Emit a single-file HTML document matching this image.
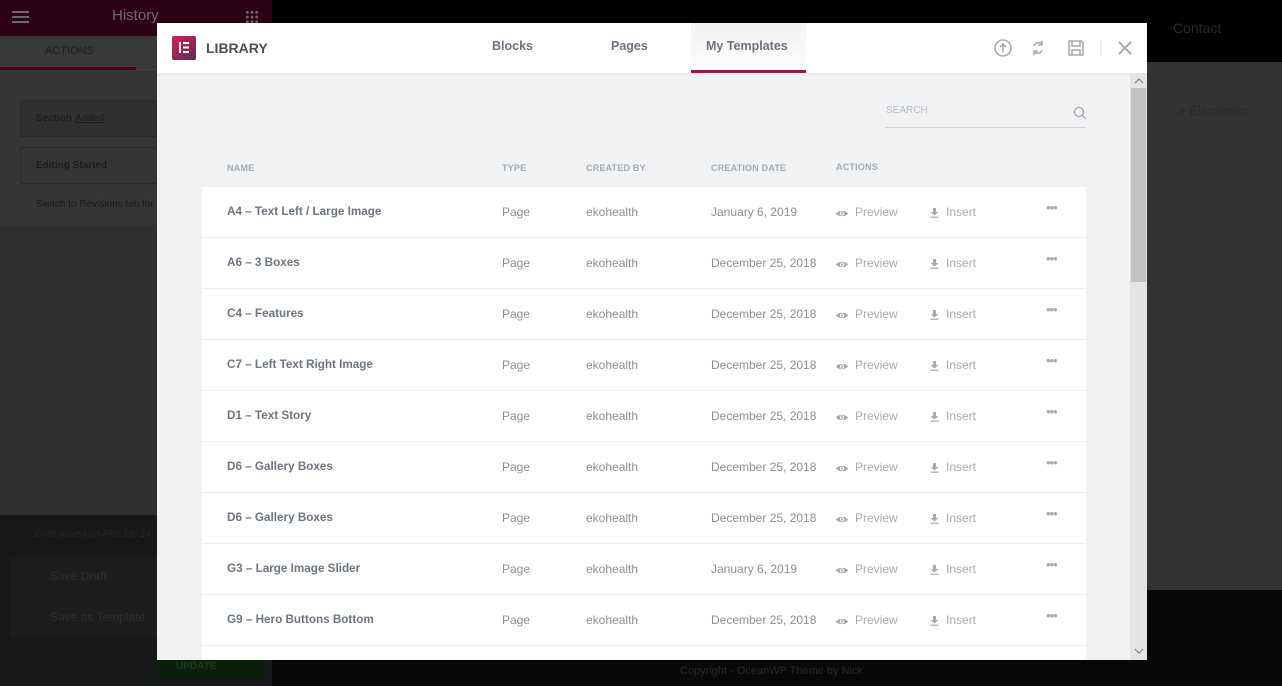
<!DOCTYPE html>
<html><head><meta charset="utf-8"><style>
*{box-sizing:border-box;margin:0;padding:0}
body{width:1282px;height:686px;overflow:hidden;position:relative;font-family:"Liberation Sans",Arial,sans-serif;background:#000}
.abs{position:absolute}
.row{position:absolute;left:0;width:884px;height:51px;background:#fff;border-bottom:1px solid #eef0f2;font-size:12px;color:#8a9099}
.row span{position:absolute;top:18px;white-space:nowrap}
.nm{left:25px;color:#6d7580;font-weight:bold;font-size:11.7px}
.pv{left:634px;color:#a4abb3}
.in{left:728px;color:#a4abb3}
.dt{left:844px;top:13px!important;color:#a4abb3;font-size:13px;letter-spacing:-1px}
.hd{position:absolute;font-size:9px;color:#a4abb3;font-weight:bold;letter-spacing:.2px}
svg.ic{vertical-align:-2px;margin-right:7px}
</style></head><body>
<div class="abs" style="left:0;top:0;width:272px;height:36px;background:#2d0214"></div>
<div class="abs" style="left:12px;top:11px;width:17px;height:2px;background:#6a6a6a;box-shadow:0 5px 0 #6a6a6a,0 10px 0 #6a6a6a"></div>
<div class="abs" style="left:112px;top:7px;font-size:15px;color:#6b6b6b">History</div>
<div class="abs" style="left:245px;top:10px;width:14px;height:14px;background:radial-gradient(circle,#666 1.4px,transparent 1.6px) 0 0/4.7px 4.7px"></div>
<div class="abs" style="left:0;top:36px;width:272px;height:34px;background:#383838"></div>
<div class="abs" style="left:45px;top:45px;font-size:11px;color:#1e1e1e">ACTIONS</div>
<div class="abs" style="left:0;top:67px;width:136px;height:3px;background:#4a0019"></div>
<div class="abs" style="left:136px;top:69px;width:136px;height:1px;background:#444"></div>
<div class="abs" style="left:0;top:70px;width:272px;height:155px;background:#353535"></div>
<div class="abs" style="left:0;top:225px;width:272px;height:290px;background:#2f3030"></div>
<div class="abs" style="left:20px;top:100px;width:140px;height:37px;border:1px solid #2a2a2a;background:#303030"></div>
<div class="abs" style="left:36px;top:113px;font-size:10px;color:#1c1c1c;font-weight:bold">Section <i style="font-weight:normal;text-decoration:underline">Added</i></div>
<div class="abs" style="left:20px;top:147px;width:140px;height:37px;border:1px solid #2a2a2a"></div>
<div class="abs" style="left:36px;top:160px;font-size:10px;color:#1c1c1c;font-weight:bold">Editing Started</div>
<div class="abs" style="left:36px;top:199px;font-size:10px;color:#1c1c1c">Switch to Revisions tab for</div>
<div class="abs" style="left:0;top:515px;width:272px;height:171px;background:#17181a"></div>
<div class="abs" style="left:35px;top:529px;font-size:10px;color:#262626;font-style:italic">Draft saved on Feb 19, 14</div>
<div class="abs" style="left:10px;top:557px;width:160px;height:80px;background:#1b1c1e"></div>
<div class="abs" style="left:50px;top:569px;font-size:12px;color:#2e2e2e">Save Draft</div>
<div class="abs" style="left:50px;top:610px;font-size:12px;color:#2e2e2e">Save as Template</div>
<div class="abs" style="left:157px;top:660px;width:106px;height:20px;background:#0b200b"></div>
<div class="abs" style="left:176px;top:661px;font-size:10px;color:#1e3a1e;font-weight:bold">UPDATE</div>
<div class="abs" style="left:272px;top:0;width:1010px;height:62px;background:#000"></div>
<div class="abs" style="left:1173px;top:20px;font-size:14px;color:#2a2a2a">Contact</div>
<div class="abs" style="left:1147px;top:62px;width:135px;height:528px;background:#333"></div>
<div class="abs" style="left:1178px;top:103px;font-size:13px;color:#2a2a2a">&gt; Elementor</div>
<div class="abs" style="left:272px;top:590px;width:1010px;height:96px;background:#080808"></div>
<div class="abs" style="left:680px;top:665px;font-size:11px;color:#2a2a2a">Copyright - OceanWP Theme by Nick</div>
<div class="abs" style="left:157px;top:23px;width:990px;height:637px;background:#f1f2f3;overflow:hidden">
 <div class="abs" style="left:0;top:0;width:990px;height:50px;background:#fff;box-shadow:0 1px 3px rgba(0,0,0,.06)"></div>
 <div class="abs" style="left:15px;top:13px;width:24px;height:24px;border-radius:2px;background:linear-gradient(135deg,#d41e57,#5b2e54)"></div>
 <div class="abs" style="left:22px;top:19px;width:2px;height:11px;background:#fff"></div>
 <div class="abs" style="left:26px;top:19px;width:6px;height:2px;background:#fff;box-shadow:0 4.5px 0 #fff,0 9px 0 #fff"></div>
 <div class="abs" style="left:49px;top:17px;font-size:14px;font-weight:bold;color:#4b5057">LIBRARY</div>
 <div class="abs" style="left:534px;top:0;width:115px;height:50px;background:linear-gradient(#f1f1f2,#fff)"></div>
 <div class="abs" style="left:534px;top:47px;width:115px;height:3px;background:#a4114a"></div>
 <div class="abs" style="left:335px;top:16px;font-size:12.5px;font-weight:bold;color:#6d7480">Blocks</div>
 <div class="abs" style="left:454px;top:16px;font-size:12.5px;font-weight:bold;color:#6d7480">Pages</div>
 <div class="abs" style="left:549px;top:16px;font-size:12.5px;font-weight:bold;color:#6d7480">My Templates</div>
 <svg class="abs" style="left:835px;top:14px" width="140" height="22" viewBox="0 0 140 22" fill="none" stroke="#a4abb3" stroke-width="1.6">
  <circle cx="11" cy="11" r="8"/><path d="M11 15V7M8 10l3-3 3 3"/>
  <path d="M42 9a5 5 0 0 1 8-2M50 13a5 5 0 0 1-8 2M50 4v4h-4M42 18v-4h4"/>
  <path d="M77 4h12l2 2v12H77zM80 4v5h8V4M80 18v-5h8v5"/>
  <path d="M109 3v16" stroke="#e0e3e6" stroke-width="1"/>
  <path d="M127 5l12 12M139 5l-12 12" stroke-width="2"/>
 </svg>
 <div class="abs" style="left:729px;top:82px;font-size:10px;color:#b6bcc3">SEARCH</div>
 <svg class="abs" style="left:916px;top:83px" width="14" height="14" fill="none" stroke="#9aa0a8" stroke-width="1.2"><circle cx="6" cy="6" r="4.5"/><path d="M9.5 9.5l3.5 3.5"/></svg>
 <div class="abs" style="left:728px;top:104px;width:201px;height:1px;background:#cfd3d8"></div>
 <div class="hd" style="left:70px;top:140px">NAME</div>
 <div class="hd" style="left:345px;top:140px">TYPE</div>
 <div class="hd" style="left:429px;top:140px">CREATED BY</div>
 <div class="hd" style="left:554px;top:140px">CREATION DATE</div>
 <div class="hd" style="left:679px;top:139px">ACTIONS</div>
 <div class="abs" style="left:45px;top:164px;width:884px;height:500px" id="t"></div>
 <div class="abs" style="left:973px;top:50px;width:17px;height:587px;background:#e4e4e4"></div>
 <div class="abs" style="left:974px;top:65px;width:15px;height:194px;background:#c1c1c1"></div>
 <svg class="abs" style="left:977px;top:55px" width="10" height="6" fill="none" stroke="#777"><path d="M1 5l4-4 4 4"/></svg>
 <svg class="abs" style="left:977px;top:625px" width="10" height="6" fill="none" stroke="#777"><path d="M1 1l4 4 4-4"/></svg>
</div>
<script>
var R=[["A4 – Text Left / Large Image","January 6, 2019"],["A6 – 3 Boxes","December 25, 2018"],["C4 – Features","December 25, 2018"],["C7 – Left Text Right Image","December 25, 2018"],["D1 – Text Story","December 25, 2018"],["D6 – Gallery Boxes","December 25, 2018"],["D6 – Gallery Boxes","December 25, 2018"],["G3 – Large Image Slider","January 6, 2019"],["G9 – Hero Buttons Bottom","December 25, 2018"]];
var eye='<svg class="ic" width="12" height="9" viewBox="0 0 12 9"><path d="M0 4.5C2 1 10 1 12 4.5 10 8 2 8 0 4.5z" fill="#a4abb3"/><circle cx="6" cy="4.5" r="2" fill="#fff"/><circle cx="6" cy="4.5" r="1.1" fill="#a4abb3"/></svg>';
var dl='<svg class="ic" width="9" height="10" viewBox="0 0 9 10"><path d="M3 0h3v4h2.5L4.5 7.5 0.5 4H3z" fill="#a4abb3"/><rect x="0.5" y="8.6" width="8" height="1.2" fill="#a4abb3"/></svg>';
var h='';
R.forEach(function(r,i){h+='<div class="row" style="top:'+(i*51)+'px"><span class="nm">'+r[0]+'</span><span style="left:300px">Page</span><span style="left:384px">ekohealth</span><span style="left:509px">'+r[1]+'</span><span class="pv">'+eye+'Preview</span><span class="in">'+dl+'Insert</span><span class="dt">•••</span></div>';});
h+='<div class="row" style="top:459px"></div>';
document.getElementById('t').innerHTML=h;
</script>
</body></html>
